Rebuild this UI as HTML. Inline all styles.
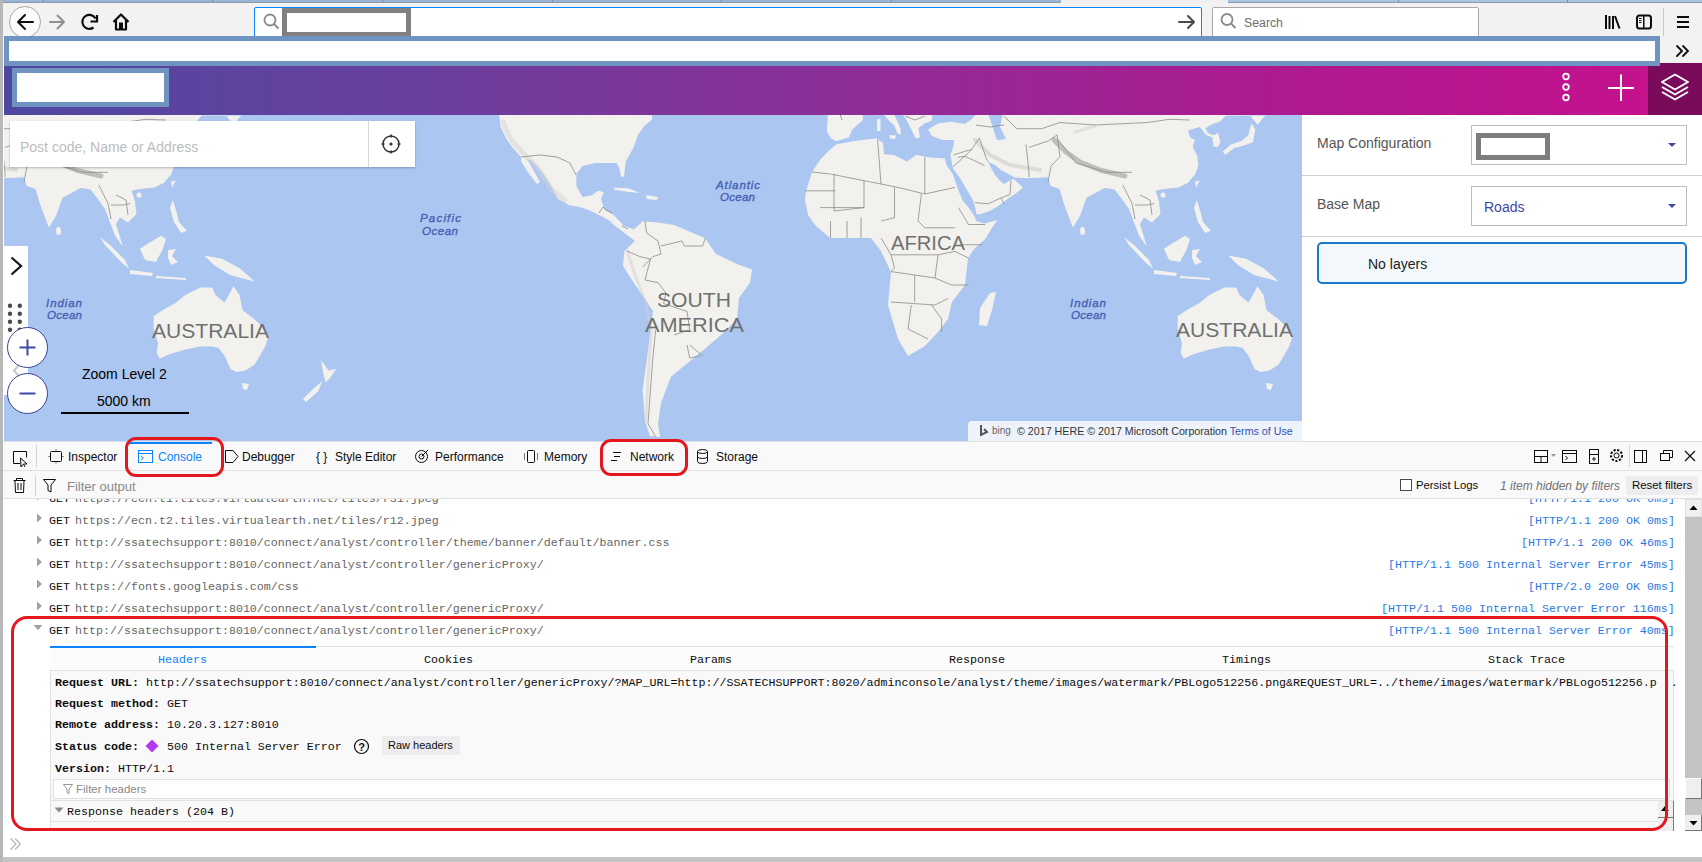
<!DOCTYPE html>
<html><head><meta charset="utf-8">
<style>
*{box-sizing:border-box;margin:0;padding:0}
html,body{width:1702px;height:862px;overflow:hidden;background:#fff;font-family:"Liberation Sans",sans-serif;position:relative}
.a{position:absolute}
.mono{font-family:"Liberation Mono",monospace}
.t{white-space:pre;line-height:1}
</style></head><body>
<!-- left gray edge -->
<div class="a" style="left:0;top:0;width:3px;height:862px;background:#b8b8b8;z-index:50"></div>
<!-- tab strip -->
<div class="a" style="left:3px;top:0;width:1699px;height:3px;background:#f0f0f0"></div>
<div class="a" style="left:3px;top:0;width:1058px;height:2px;background:#98b4d6"></div>
<div class="a" style="left:1228px;top:0;width:474px;height:2px;background:#a8c4e4"></div>
<div class="a" style="left:3px;top:2px;width:1058px;height:1px;background:#8e9aa8"></div>
<div class="a" style="left:1228px;top:2px;width:474px;height:1px;background:#8e9aa8"></div>
<div class="a" style="left:43px;top:0;width:1px;height:2px;background:#7d8ba0"></div><div class="a" style="left:212px;top:0;width:1px;height:2px;background:#7d8ba0"></div><div class="a" style="left:382px;top:0;width:1px;height:2px;background:#7d8ba0"></div><div class="a" style="left:552px;top:0;width:1px;height:2px;background:#7d8ba0"></div><div class="a" style="left:721px;top:0;width:1px;height:2px;background:#7d8ba0"></div><div class="a" style="left:891px;top:0;width:1px;height:2px;background:#7d8ba0"></div><div class="a" style="left:1398px;top:0;width:1px;height:2px;background:#7d8ba0"></div><div class="a" style="left:1567px;top:0;width:1px;height:2px;background:#7d8ba0"></div>
<!-- toolbar -->
<div class="a" style="left:3px;top:3px;width:1699px;height:60px;background:#f2f2f2"></div>
<div class="a" style="left:9px;top:6px;width:32px;height:32px;border-radius:50%;border:1px solid #a8a8a8;background:#fbfbfb"></div>
<svg class="a" style="left:0;top:0" width="140" height="40">
 <path d="M18 22 H33 M25 15 L18 22 L25 29" fill="none" stroke="#0c0c0d" stroke-width="2" stroke-linecap="round" stroke-linejoin="round"/>
 <path d="M50 22 H64 M57.5 15.5 L64 22 L57.5 28.5" fill="none" stroke="#8f8f8f" stroke-width="2" stroke-linecap="round" stroke-linejoin="round"/>
 <path d="M95.5 18.5 A7 7 0 1 0 93.5 27.5" fill="none" stroke="#0c0c0d" stroke-width="2.2"/>
 <path d="M97 15 V21.5 H90.5" fill="none" stroke="#0c0c0d" stroke-width="2.2"/>
 <path d="M113.5 22 L121 14.5 L128.5 22 M116 20 V29.5 H126 V20" fill="none" stroke="#0c0c0d" stroke-width="2.2" stroke-linejoin="round"/>
 <rect x="119" y="22.5" width="4" height="7" fill="#0c0c0d"/>
</svg>
<!-- url bar -->
<div class="a" style="left:254px;top:7px;width:948px;height:34px;border:1px solid #0a84ff;border-radius:2px;background:#fff"></div>
<svg class="a" style="left:260px;top:10px" width="24" height="24"><circle cx="10" cy="10" r="5.5" fill="none" stroke="#8a8a8a" stroke-width="1.8"/><path d="M14 14 L18.5 18.5" stroke="#8a8a8a" stroke-width="2"/></svg>
<div class="a" style="left:282px;top:8px;width:129px;height:29px;border:5px solid #808080;background:#fff"></div>
<svg class="a" style="left:1176px;top:12px" width="24" height="20"><path d="M3 10 H18 M12 4 L18 10 L12 16" fill="none" stroke="#4a4a4a" stroke-width="2" stroke-linecap="round" stroke-linejoin="round"/></svg>
<!-- search -->
<div class="a" style="left:1212px;top:7px;width:267px;height:34px;border:1px solid #a8a8a8;border-radius:2px;background:#fff"></div>
<svg class="a" style="left:1218px;top:10px" width="24" height="24"><circle cx="9" cy="9.5" r="5.5" fill="none" stroke="#8a8a8a" stroke-width="1.8"/><path d="M13 13.5 L17.5 18" stroke="#8a8a8a" stroke-width="2"/></svg>
<div class="a t" style="left:1244px;top:17px;font-size:12.3px;color:#6d6d6d">Search</div>
<!-- right toolbar icons -->
<svg class="a" style="left:1600px;top:8px" width="100" height="56">
 <rect x="5" y="7" width="2" height="14" fill="#0c0c0d"/><rect x="8.5" y="8" width="2" height="13" fill="#0c0c0d"/><rect x="12" y="8" width="2" height="13" fill="#0c0c0d"/>
 <path d="M15 8 L19.5 20.5" stroke="#0c0c0d" stroke-width="2"/>
 <rect x="37" y="7.5" width="14" height="13" rx="2.5" fill="none" stroke="#0c0c0d" stroke-width="2"/>
 <rect x="43" y="8" width="1.5" height="12" fill="#0c0c0d"/>
 <rect x="39" y="10" width="2.5" height="1" fill="#0c0c0d"/><rect x="39" y="12" width="2.5" height="1" fill="#0c0c0d"/><rect x="39" y="14" width="2.5" height="1" fill="#0c0c0d"/>
 <rect x="63" y="-2" width="1" height="30" fill="#c8c8c8"/>
 <rect x="77" y="8" width="12" height="2" fill="#0c0c0d"/><rect x="77" y="13" width="12" height="2" fill="#0c0c0d"/><rect x="77" y="18" width="12" height="2" fill="#0c0c0d"/>
 <path d="M77 38 L82 43 L77 48 M83 38 L88 43 L83 48" fill="none" stroke="#0c0c0d" stroke-width="1.8" stroke-linecap="round"/>
</svg>
<!-- bookmark band (blue) -->
<div class="a" style="left:4px;top:36px;width:1656px;height:30px;background:#7094c2;z-index:5"></div>
<div class="a" style="left:9px;top:41px;width:1646px;height:20px;background:#fff;z-index:6"></div>
<!-- app header -->
<div class="a" style="left:4px;top:63px;width:1698px;height:52px;background:linear-gradient(90deg,#4e48a0 0%,#6a3f9d 25%,#8e2d98 50%,#ad1a90 75%,#c8108c 100%)"></div>
<div class="a" style="left:1648px;top:63px;width:54px;height:52px;background:#7a0b5a"></div>
<div class="a" style="left:12px;top:68px;width:157px;height:39px;border:5px solid #7094c2;background:#fff"></div>
<svg class="a" style="left:1550px;top:66px" width="152" height="48">
 <circle cx="16" cy="10.5" r="2.8" fill="none" stroke="#fff" stroke-width="1.8"/>
 <circle cx="16" cy="21" r="2.8" fill="none" stroke="#fff" stroke-width="1.8"/>
 <circle cx="16" cy="31.5" r="2.8" fill="none" stroke="#fff" stroke-width="1.8"/>
 <path d="M58 22 H84 M71 8.5 V35" stroke="#fff" stroke-width="2"/>
 <path d="M112 16 L125 8.5 L138 16 L125 23.5 Z" fill="none" stroke="#fff" stroke-width="2" stroke-linejoin="round"/>
 <path d="M112 21 L125 28.5 L138 21" fill="none" stroke="#fff" stroke-width="2" stroke-linejoin="round"/>
 <path d="M112 26 L125 33.5 L138 26" fill="none" stroke="#fff" stroke-width="2" stroke-linejoin="round"/>
</svg>

<!-- MAP -->
<div id="map" class="a" style="left:4px;top:115px;width:1298px;height:326px;background:#abc6f0;overflow:hidden">
<svg id="land" class="a" style="left:0;top:0" width="1298" height="326" viewBox="4 115 1298 326"><defs><g id="w"><polygon points="499,114 652,114 652,119.7 644.3,125.9 638,135 633.5,147.5 625.8,161.4 624,176.8 621,176.8 619.6,169 616.5,163 607.3,163 595,163 582.6,166 576.4,173.7 576.4,186 582.6,196.9 592,195.3 598,190.7 604,192 601,198.4 604,209 613.5,215 624,226 633.5,229.3 635,234 629,231 618,227 610.4,221 598,214.5 588.8,210 579.5,207 570,205.5 558,199 551.7,187 544,174.5 531.7,160.5 520.9,157 513,148 507,140 500.8,127.4" fill="#f2f1ed"/><polygon points="521,155 525,156 531,166 540,182 537,184 527,171 521,161" fill="#f2f1ed"/><polygon points="613.5,187.6 629,188.5 640,193 629,192 615,190" fill="#f2f1ed"/><polygon points="646,195 658,197 657,200 647,199" fill="#f2f1ed"/><polygon points="608.7,221 620,227 632,231 642.7,221.3 658,222.6 674,225 705,238 716,254 737,264 752,269.6 750,282.7 739,298 737,319 721,335 703,350.5 690,361 671,376.7 666,389.7 661,402.8 658,423.7 660,437 650,436 645,421 642.7,389.7 648,350.5 653,311 642.7,295.7 632,280 623,265.7 624.4,251 635,241" fill="#f2f1ed"/><polygon points="806,191 812,172 820,160 828,151.6 836,144.6 854,141 876,138.4 883,142.8 884,154.3 894,155 907,161.4 916,155 930,157.4 945,158.6 946.2,164.4 953.2,174.8 957.8,188.7 962.5,200.3 968.3,207.3 974,215.4 976.4,221.2 984.5,223.5 997.3,220 990.3,230.5 985.7,238.6 975,248 968,258 965,285 952,302 948,319 938,332 925,346 908,356 898,339 888,305 891,272 881,251 871,238 850,238 830,238 815,225 808,215 805,200" fill="#f2f1ed"/><polygon points="990,293 996,292 992,310 987,326 979,325 980,308" fill="#f2f1ed"/><polygon points="827.6,114 862.9,114 862.9,120 852.3,129.6 848.8,137.5 836.4,141 831,138.4 826.7,131.4 827.6,120.8" fill="#f2f1ed"/><polygon points="883,114 893.7,114 898,122.6 900.7,129.6 900.7,135 897.2,133 894.6,126 887.5,119" fill="#f2f1ed"/><polygon points="889,135 896,135.5 895,139.3 890,138.5" fill="#f2f1ed"/><polygon points="877,119 880.5,119 880.5,131 877,131" fill="#f2f1ed"/><polygon points="902.5,114 932.5,114 931.6,120.8 924.5,123.5 918.4,128 920,137.5 915.7,138.4 911.3,129.6 907,120.8" fill="#f2f1ed"/><polygon points="928,129.6 938,123.5 951,121.7 965,124 972,119 976,114 1266,114 1265.7,115.5 1226,115.5 1220.5,121.3 1211,124.8 1205.4,128.2 1207.7,133 1213.5,135.2 1218,133 1220.5,142 1218,146.8 1213.5,146.8 1212.4,137.5 1206.6,135.2 1199.6,127 1188,130.6 1190.3,137.5 1195,140 1192.6,146.8 1197.3,156 1198.4,165.4 1195,174.6 1188,182.8 1178.7,187.4 1168.3,188.6 1159,189.7 1155.6,191 1159,201 1160.5,214 1152,222.5 1144,217.6 1140,224 1147,247 1139,235.6 1134,222.5 1129,209 1121,197.8 1114.5,189.6 1104.6,188 1086.5,197.8 1080,216 1073,227.4 1068.5,216 1064,204 1059.6,189 1050.7,186 1047.7,177.3 1030,178 1022.8,178 1014.7,177.5 1011.2,175.5 1002,170.5 995,165 988,161.5 990.3,166.7 995,174.8 999.6,180.6 1004.2,184 1011.2,179.8 1013.5,179 1018.2,183 1022.8,187.6 1021.6,188.7 1015.8,193.4 1008.9,198 999.6,205 990.3,210.8 980,214.2 976.4,214.2 975.2,207.3 973,200.3 967,190 960.2,178.3 953.2,169 950.3,155 953.2,147 954.4,140 942,140 931.6,135.8" fill="#f2f1ed"/><polygon points="1251.8,123.6 1255.3,129.4 1253,142.2 1243.7,145.6 1234.4,148 1225,155 1222.8,151.4 1231,144.5 1241.4,141 1248.3,135.2 1250.6,126" fill="#f2f1ed"/><polygon points="1250.6,116 1264.6,116 1257.6,124.8" fill="#f2f1ed"/><polygon points="1195,181.6 1199.6,180.4 1196.1,187.4" fill="#f2f1ed"/><polygon points="1124,237 1134,245 1149,260 1153,268.5 1145,262 1129,245" fill="#f2f1ed"/><polygon points="1154,270 1177,273 1176,276 1154,274" fill="#f2f1ed"/><polygon points="1180,276 1210,278 1210,280 1180,278" fill="#f2f1ed"/><polygon points="1164,248.8 1177,240.6 1185,235.7 1190,239 1187,248.8 1180,262 1169,260" fill="#f2f1ed"/><polygon points="1192,250 1200,249 1196,256 1202,262 1195,265 1192,258" fill="#f2f1ed"/><polygon points="1196.7,200 1200,210 1203,222 1211,230.7 1205,233 1198,222 1194,208" fill="#f2f1ed"/><polygon points="1228,255.4 1246,258.7 1264,268.5 1279,281.7 1254,275 1238,265" fill="#f2f1ed"/><polygon points="1177.6,316.2 1186.6,310.2 1200.2,302.6 1209.2,295 1224.3,287.5 1236.4,287.5 1239.4,295 1248.5,302.6 1254.5,292 1257.5,286 1263.5,295 1266.6,310.2 1278.6,319.2 1284.7,325.2 1292.2,337.3 1289.2,346.4 1283.2,357 1278.6,364.5 1269.6,370.5 1260.5,372 1254.5,369 1248.5,355.4 1242.4,347.9 1236.4,346.4 1224.3,346.4 1209.2,349.4 1194.2,353.9 1183.6,358.4 1180.6,352.4 1182,343.3 1177.6,328.3" fill="#f2f1ed"/><polygon points="1266,383 1273,384 1271,390 1267,389" fill="#f2f1ed"/><polygon points="1345,360 1352.5,370.5 1360,369 1354,378 1349.5,382.6 1347,372" fill="#f2f1ed"/><polygon points="1346.5,381 1342,391.6 1330,402 1327,399 1337.5,388.6" fill="#f2f1ed"/><polygon points="988,113 1003,113 1000,127 1006,139 997,140 993,128" fill="#abc6f0"/><ellipse cx="1082.5" cy="231" rx="2.5" ry="4" fill="#f2f1ed"/><circle cx="1163" cy="195" r="2.5" fill="#f2f1ed"/><g fill="none" stroke-linecap="round" stroke-linejoin="round"><polyline points="1054,140 1066,152 1080,162 1100,170 1125,176" stroke="#a8a8a8" stroke-width="5" opacity="0.7"/><polyline points="503,122 510,138 522,152 538,168 552,190 565,200" stroke="#d4d4d4" stroke-width="5" opacity="0.5"/><polyline points="627,250 635,275 645,300 651,330 648,380 646,420" stroke="#d0d0d0" stroke-width="3" opacity="0.5"/><polyline points="975,140 990,155 1010,165 1040,170" stroke="#c8c8c8" stroke-width="4" opacity="0.5"/><polyline points="1075,132 1095,126" stroke="#cfcfcf" stroke-width="3" opacity="0.5"/></g><g fill="none" stroke="#8c8c8c" stroke-width="0.8" stroke-linejoin="round"><polyline points="877.6,140 881,184"/><polyline points="924.8,157 924.8,194"/><polyline points="830.5,174 864,180.7 881,184 898,187.4 924.8,194 955,187.4"/><polyline points="864,180.7 864,207.6 834,211"/><polyline points="894.5,187.4 894.5,217.7 881,221"/><polyline points="921.4,194 918,221 924.8,227.8 955,227.8"/><polyline points="834,174 834,211"/><polyline points="805,190.8 835.5,190.8"/><polyline points="820,207.6 864,207.6"/><polyline points="830.5,221 830.5,238"/><polyline points="847,221 847,238"/><polyline points="861,217.7 861,238"/><polyline points="881,238 891,254.8 894.5,268 891,271.6"/><polyline points="891,254.8 938,254.8 955,251.4 968.5,258"/><polyline points="938,254.8 935,278 914.7,275 891,271.6"/><polyline points="935,278 951.7,285 968.5,285"/><polyline points="891,302 935,305 948,298.5"/><polyline points="914.7,275 914.7,302"/><polyline points="911.3,305 908,329 928,339"/><polyline points="931.5,305 941.6,318.8 941.6,332"/><polyline points="958.5,207.6 968.5,224.5 985.4,224.5"/><polyline points="962,244.7 982,244.7"/><polyline points="812,172 830,174"/><polyline points="645,221 646.6,233 658,241 661,254 653,256.6 642.7,267"/><polyline points="661,246 681.8,241 684.4,246 702.7,246 705.3,238"/><polyline points="627,251 640,256.6 650.5,259"/><polyline points="650.5,259 645,280 658,282.7 666,293 663.5,303.5"/><polyline points="663.5,303.5 679,308.8 687,311.4 689.7,329.7"/><polyline points="655.7,329.7 653,355.8 650.5,389.7 648,423.7 655.7,436.7"/><polyline points="674,335 689.7,329.7"/><polyline points="689.7,345 702.7,355.8"/><polyline points="687,345 689.7,358 700,355.8"/><polyline points="622,226 628,229"/><polyline points="521,157 540,155 557,157 570,163 576,175"/><polyline points="599,213 603,207 606,210 612,213"/><polyline points="979.4,138 985.6,156.7 988,161.5"/><polyline points="953.2,166.7 964.8,156.2 984.5,165.5"/><polyline points="975,202.6 988,203.8 1000.8,198 1010,194.5 1011,180"/><polyline points="1000.8,198 1004.2,203.8"/><polyline points="957.8,157.4 964.8,156.2 971.8,149.3"/><polyline points="953.2,155 971.8,149.3 979.4,138"/><polyline points="1026,144.3 1029,172.3 1029,177"/><polyline points="1029,147.4 1048,141 1057,135 1060,156.7 1051,166 1048,181.7"/><polyline points="1057,138 1076,163 1107,172.3 1132,172.3"/><polyline points="1004,116.2 1016.8,128.7 1041.7,128.7 1060,122.5"/><polyline points="1060,122.5 1095,125 1147.6,122.5 1169.4,119.3 1190,120"/><polyline points="1122.7,184.8 1132,203.5 1135,219"/><polyline points="1135,205 1147.6,205 1154,203.5"/><polyline points="1140,195 1150,200 1152,215"/><polyline points="976,125 990,127 1004,125"/><polyline points="840,114 842,120"/><polyline points="905,116 915,120 925,116"/></g></g></defs><use href="#w"/><use href="#w" x="-1024"/></svg>
<svg class="a" style="left:0;top:0" width="1298" height="326" viewBox="4 115 1298 326">
 <g font-family="Liberation Sans" font-size="20.5" fill="#707070" stroke="#f4f3ee" stroke-width="0" >
  <text x="152" y="337.7" textLength="117" lengthAdjust="spacingAndGlyphs">AUSTRALIA</text>
  <text x="1176" y="337" textLength="117" lengthAdjust="spacingAndGlyphs">AUSTRALIA</text>
  <text x="657" y="306.7" textLength="74" lengthAdjust="spacingAndGlyphs">SOUTH</text>
  <text x="645" y="331.7" textLength="99" lengthAdjust="spacingAndGlyphs">AMERICA</text>
  <text x="891" y="249.7" textLength="74" lengthAdjust="spacingAndGlyphs">AFRICA</text>
 </g>
 <g font-family="Liberation Sans" font-size="11.5" font-style="italic" fill="#4760b2" stroke="#4760b2" stroke-width="0.35">
  <text x="420" y="222.3" textLength="41" lengthAdjust="spacing">Pacific</text>
  <text x="422" y="234.6" textLength="36" lengthAdjust="spacing">Ocean</text>
  <text x="716" y="188.5" textLength="44" lengthAdjust="spacing">Atlantic</text>
  <text x="720" y="201" textLength="35" lengthAdjust="spacing">Ocean</text>
  <text x="46" y="307" textLength="36" lengthAdjust="spacing">Indian</text>
  <text x="47" y="319" textLength="35" lengthAdjust="spacing">Ocean</text>
  <text x="1070" y="306.6" textLength="36" lengthAdjust="spacing">Indian</text>
  <text x="1071" y="319" textLength="35" lengthAdjust="spacing">Ocean</text>
 </g>
</svg>
<!-- search box -->
<div class="a" style="left:6px;top:6px;width:405px;height:46px;background:#fff;box-shadow:0 1px 2px rgba(0,0,0,0.25)"></div>
<div class="a" style="left:364px;top:6px;width:1px;height:46px;background:#d8d8d8"></div>
<div class="a t" style="left:16px;top:25px;font-size:14px;color:#bdbdbd">Post code, Name or Address</div>
<svg class="a" style="left:376px;top:18px" width="22" height="22"><circle cx="11" cy="11" r="8" fill="none" stroke="#333" stroke-width="1.5"/><circle cx="11" cy="11" r="1.6" fill="#333"/><path d="M11 1.5 V4.5 M11 17.5 V20.5 M1.5 11 H4.5 M17.5 11 H20.5" stroke="#333" stroke-width="1.6"/></svg>
<!-- side tab -->
<div class="a" style="left:0;top:131px;width:24px;height:149px;background:#fff"></div>
<svg class="a" style="left:0;top:140px" width="24" height="24"><path d="M7.5 2.5 L17 11 L7.5 19.5" fill="none" stroke="#1a1a1a" stroke-width="2.3"/></svg><svg class="a" style="left:0;top:248px" width="24" height="16"><path d="M15 2 L10 7.5 L15 13" fill="none" stroke="#c8c8c8" stroke-width="2"/></svg>
<svg class="a" style="left:0;top:185px" width="24" height="40"><g fill="#4a4a4a"><circle cx="6" cy="5.8" r="2.2"/><circle cx="15.8" cy="5.8" r="2.2"/><circle cx="6" cy="13.8" r="2.2"/><circle cx="15.8" cy="13.8" r="2.2"/><circle cx="6" cy="21.8" r="2.2"/><circle cx="15.8" cy="21.8" r="2.2"/><circle cx="6" cy="29.8" r="2.2"/><circle cx="15.8" cy="29.8" r="2.2"/></g></svg>
<!-- zoom buttons -->
<div class="a" style="left:3px;top:212px;width:41px;height:41px;border-radius:50%;border:1px solid #3b3f8f;background:#fff"></div>
<svg class="a" style="left:3px;top:212px" width="41" height="41"><path d="M12.5 20.5 H28.5 M20.5 12.5 V28.5" stroke="#3b49a8" stroke-width="2"/></svg>
<div class="a" style="left:3px;top:258px;width:41px;height:41px;border-radius:50%;border:1px solid #3b3f8f;background:#fff"></div>
<svg class="a" style="left:3px;top:258px" width="41" height="41"><path d="M12.5 20.5 H28.5" stroke="#3b49a8" stroke-width="2"/></svg>
<div class="a t" style="left:78px;top:252px;font-size:14px;color:#000">Zoom Level 2</div>
<div class="a t" style="left:93px;top:279px;font-size:14px;color:#000">5000 km</div>
<div class="a" style="left:57px;top:297px;width:128px;height:2px;background:#000"></div>
<!-- attribution -->
<div class="a" style="left:964px;top:306px;width:334px;height:20px;background:#eef3fb;border-top-left-radius:4px"></div>
<svg class="a" style="left:975px;top:309px" width="40" height="14"><path d="M2 1 V11 L8 8 L5 5" fill="none" stroke="#555" stroke-width="2"/><text x="13" y="10" font-family="Liberation Sans" font-size="10" fill="#666">bing</text></svg>
<div class="a t" style="left:1013px;top:311px;font-size:10.7px;color:#333">© 2017 HERE © 2017 Microsoft Corporation <span style="color:#3650a8">Terms of Use</span></div>
</div>

<!-- RIGHT PANEL -->
<div class="a" style="left:1302px;top:115px;width:400px;height:326px;background:#fff">
 <div class="a t" style="left:15px;top:21px;font-size:14px;color:#555">Map Configuration</div>
 <div class="a" style="left:169px;top:10px;width:216px;height:40px;border:1px solid #bdbdbd;background:#fff"></div>
 <div class="a" style="left:174px;top:18px;width:74px;height:27px;border:5px solid #7d7d7d;background:#fff"></div>
 <svg class="a" style="left:365px;top:27px" width="12" height="8"><path d="M1 1 H9 L5 5 Z" fill="#3d47a3"/></svg>
 <div class="a" style="left:0;top:60px;width:400px;height:1px;background:#d0d0d0"></div>
 <div class="a t" style="left:15px;top:82px;font-size:14px;color:#555">Base Map</div>
 <div class="a" style="left:169px;top:71px;width:216px;height:40px;border:1px solid #bdbdbd;background:#fff"></div>
 <div class="a t" style="left:182px;top:85px;font-size:14px;color:#3d47a3">Roads</div>
 <svg class="a" style="left:365px;top:88px" width="12" height="8"><path d="M1 1 H9 L5 5 Z" fill="#3d47a3"/></svg>
 <div class="a" style="left:0;top:121px;width:400px;height:1px;background:#d0d0d0"></div>
 <div class="a" style="left:15px;top:127px;width:370px;height:42px;border:2px solid #1b78c6;border-radius:5px;background:#f3f8fc"></div>
 <div class="a t" style="left:66px;top:142px;font-size:14px;color:#222">No layers</div>
</div>

<!-- DEVTOOLS -->
<div class="a" style="left:3px;top:441px;width:1699px;height:30px;background:#f9f9fa;border-bottom:1px solid #e0e0e2"></div>
<div class="a" style="left:3px;top:441px;width:1699px;height:1px;background:#e0e0e2"></div>
<svg class="a" style="left:0;top:441px" width="800" height="30">
 <g fill="none" stroke="#0c0c0d" stroke-width="1">
  <path d="M26.5 16.5 V10.5 H13.5 V22.5 H20"/>
  <path d="M20.5 17 L27 23 L23.5 23 L25 26 M20.5 17 L21 26 L23 23.5" stroke-width="1"/>
 </g>
 <rect x="36" y="4" width="1" height="22" fill="#d7d7db"/>
 <g fill="none" stroke="#0c0c0d" stroke-width="1">
  <rect x="50.5" y="10.5" width="11" height="10" rx="1"/>
  <path d="M48 15.5 H50 M62 15.5 H64 M56 8 V10 M56 21 V23" stroke="#888"/>
 </g>
 <g fill="none" stroke="#0a84ff" stroke-width="1">
  <rect x="138.5" y="9.5" width="14" height="12"/>
  <path d="M138.5 12.5 H152.5 M141 15 L143.5 17 L141 19"/>
 </g>
 <path d="M225.5 9.5 H233 L238 15.5 L233 21.5 H225.5 Z" fill="none" stroke="#0c0c0d"/>
 <text x="316" y="19.5" font-family="Liberation Sans" font-size="12" fill="#0c0c0d">{ }</text>
 <g fill="none" stroke="#0c0c0d">
  <circle cx="421.5" cy="15.5" r="6"/><circle cx="421.5" cy="15.5" r="2.5"/><path d="M421.5 15.5 L428 9"/>
 </g>
 <g fill="none" stroke="#0c0c0d">
  <rect x="527.5" y="9.5" width="7" height="12" rx="1"/><path d="M524.5 12 V19 M537.5 12 V19" stroke="#777"/>
 </g>
 <g stroke="#0c0c0d"><path d="M613 11.5 H621 M614 15.5 H620 M611 19.5 H617"/></g>
 <g fill="none" stroke="#0c0c0d">
  <ellipse cx="702.5" cy="10.5" rx="5" ry="2"/><path d="M697.5 10.5 V20.5 A5 2 0 0 0 707.5 20.5 V10.5 M697.5 15.5 A5 2 0 0 0 707.5 15.5"/>
 </g>
</svg>
<div class="a" style="left:128px;top:442px;width:84px;height:2px;background:#0a84ff"></div>
<div class="a t" style="left:68px;top:451px;font-family:'Liberation Sans',sans-serif;font-size:12px;color:#0c0c0d">Inspector</div>
<div class="a t" style="left:158px;top:451px;font-family:'Liberation Sans',sans-serif;font-size:12px;color:#0a84ff">Console</div>
<div class="a t" style="left:242px;top:451px;font-family:'Liberation Sans',sans-serif;font-size:12px;color:#0c0c0d">Debugger</div>
<div class="a t" style="left:335px;top:451px;font-family:'Liberation Sans',sans-serif;font-size:12px;color:#0c0c0d">Style Editor</div>
<div class="a t" style="left:435px;top:451px;font-family:'Liberation Sans',sans-serif;font-size:12px;color:#0c0c0d">Performance</div>
<div class="a t" style="left:544px;top:451px;font-family:'Liberation Sans',sans-serif;font-size:12px;color:#0c0c0d">Memory</div>
<div class="a t" style="left:630px;top:451px;font-family:'Liberation Sans',sans-serif;font-size:12px;color:#0c0c0d">Network</div>
<div class="a t" style="left:716px;top:451px;font-family:'Liberation Sans',sans-serif;font-size:12px;color:#0c0c0d">Storage</div>
<svg class="a" style="left:1520px;top:441px" width="182" height="30">
 <g fill="none" stroke="#0c0c0d">
  <rect x="14.5" y="9.5" width="13" height="12"/><path d="M14.5 15.5 H27.5 M21 15.5 V21.5"/>
 </g>
 <path d="M31 13 H36 L33.5 16 Z" fill="#999"/>
 <g fill="none" stroke="#0c0c0d">
  <rect x="42.5" y="9.5" width="14" height="12"/><path d="M42.5 12.5 H56.5 M45.5 15 L47.5 17 L45.5 19"/>
  <rect x="69.5" y="8.5" width="9" height="14"/><circle cx="74" cy="18" r="1.2"/><path d="M69.5 13.5 H78.5"/>
  <circle cx="96.5" cy="14.5" r="2.5"/><circle cx="96.5" cy="14.5" r="5.5" stroke-dasharray="2.2 1.5" stroke-width="2"/>
 </g>
 <rect x="109" y="4" width="1" height="22" fill="#d7d7db"/>
 <g fill="none" stroke="#0c0c0d">
  <rect x="114.5" y="9.5" width="12" height="12"/><path d="M122.5 9.5 V21.5"/>
  <rect x="140.5" y="12.5" width="9" height="7"/><path d="M143.5 12.5 V9.5 H152.5 V16.5 H149.5"/>
  <path d="M165 10 L175 20 M175 10 L165 20" stroke-width="1.2"/>
 </g>
</svg>
<div class="a" style="left:3px;top:471px;width:1699px;height:28px;background:#f9f9fa;border-bottom:1px solid #e0e0e2"></div>
<svg class="a" style="left:0;top:471px" width="70" height="28">
 <g fill="none" stroke="#0c0c0d">
  <path d="M13.5 9.5 H25.5 M16.5 9.5 V7.5 H22.5 V9.5 M15 10 L15.5 21.5 H23.5 L24 10 M18 12 V19 M21 12 V19"/>
 </g>
 <rect x="35" y="4" width="1" height="21" fill="#d7d7db"/>
 <path d="M43.5 8.5 H55.5 L51 14 V21 L48 19.5 V14 Z" fill="none" stroke="#0c0c0d"/>
</svg>
<div class="a t" style="left:67px;top:480px;font-family:'Liberation Sans',sans-serif;font-size:13px;color:#8a8a8a">Filter output</div>
<div class="a" style="left:1400px;top:479px;width:12px;height:12px;border:1px solid #4a4a4a;background:#fff"></div>
<div class="a t" style="left:1416px;top:480px;font-family:'Liberation Sans',sans-serif;font-size:11.3px;color:#0c0c0d">Persist Logs</div>
<div class="a t" style="left:1500px;top:480px;font-family:'Liberation Sans',sans-serif;font-size:12px;font-style:italic;color:#737373">1 item hidden by filters</div>
<div class="a" style="left:1626px;top:476px;width:72px;height:19px;background:#ededf0;border-radius:2px"></div>
<div class="a t" style="left:1632px;top:480px;font-family:'Liberation Sans',sans-serif;font-size:11.4px;color:#0c0c0d">Reset filters</div>
<div class="a" style="left:3px;top:499px;width:1682px;height:332px;overflow:hidden;background:#fff">
<div class="a" style="left:-3px;top:-499px;width:1702px;height:862px">
<svg class="a" style="left:36px;top:491px" width="8" height="12"><path d="M1 0.5 V9.5 L6 5 Z" fill="#a0a0a0"/></svg><div class="a t" style="left:49px;top:494px;font-family:'Liberation Mono',monospace;font-size:11.67px;color:#0c0c0d">GET</div><div class="a t" style="left:75px;top:494px;font-family:'Liberation Mono',monospace;font-size:11.67px;color:#666">https://ecn.t1.tiles.virtualearth.net/tiles/r31.jpeg</div><div class="a t" style="left:1528px;top:494px;font-family:'Liberation Mono',monospace;font-size:11.67px;color:#2a7ae2">[HTTP/1.1 200 OK 0ms]</div>
<svg class="a" style="left:36px;top:513px" width="8" height="12"><path d="M1 0.5 V9.5 L6 5 Z" fill="#a0a0a0"/></svg><div class="a t" style="left:49px;top:516px;font-family:'Liberation Mono',monospace;font-size:11.67px;color:#0c0c0d">GET</div><div class="a t" style="left:75px;top:516px;font-family:'Liberation Mono',monospace;font-size:11.67px;color:#666">https://ecn.t2.tiles.virtualearth.net/tiles/r12.jpeg</div><div class="a t" style="left:1528px;top:516px;font-family:'Liberation Mono',monospace;font-size:11.67px;color:#2a7ae2">[HTTP/1.1 200 OK 0ms]</div>
<svg class="a" style="left:36px;top:535px" width="8" height="12"><path d="M1 0.5 V9.5 L6 5 Z" fill="#a0a0a0"/></svg><div class="a t" style="left:49px;top:538px;font-family:'Liberation Mono',monospace;font-size:11.67px;color:#0c0c0d">GET</div><div class="a t" style="left:75px;top:538px;font-family:'Liberation Mono',monospace;font-size:11.67px;color:#666">http://ssatechsupport:8010/connect/analyst/controller/theme/banner/default/banner.css</div><div class="a t" style="left:1521px;top:538px;font-family:'Liberation Mono',monospace;font-size:11.67px;color:#2a7ae2">[HTTP/1.1 200 OK 46ms]</div>
<svg class="a" style="left:36px;top:557px" width="8" height="12"><path d="M1 0.5 V9.5 L6 5 Z" fill="#a0a0a0"/></svg><div class="a t" style="left:49px;top:560px;font-family:'Liberation Mono',monospace;font-size:11.67px;color:#0c0c0d">GET</div><div class="a t" style="left:75px;top:560px;font-family:'Liberation Mono',monospace;font-size:11.67px;color:#666">http://ssatechsupport:8010/connect/analyst/controller/genericProxy/</div><div class="a t" style="left:1388px;top:560px;font-family:'Liberation Mono',monospace;font-size:11.67px;color:#2a7ae2">[HTTP/1.1 500 Internal Server Error 45ms]</div>
<svg class="a" style="left:36px;top:579px" width="8" height="12"><path d="M1 0.5 V9.5 L6 5 Z" fill="#a0a0a0"/></svg><div class="a t" style="left:49px;top:582px;font-family:'Liberation Mono',monospace;font-size:11.67px;color:#0c0c0d">GET</div><div class="a t" style="left:75px;top:582px;font-family:'Liberation Mono',monospace;font-size:11.67px;color:#666">https://fonts.googleapis.com/css</div><div class="a t" style="left:1528px;top:582px;font-family:'Liberation Mono',monospace;font-size:11.67px;color:#2a7ae2">[HTTP/2.0 200 OK 0ms]</div>
<svg class="a" style="left:36px;top:601px" width="8" height="12"><path d="M1 0.5 V9.5 L6 5 Z" fill="#a0a0a0"/></svg><div class="a t" style="left:49px;top:604px;font-family:'Liberation Mono',monospace;font-size:11.67px;color:#0c0c0d">GET</div><div class="a t" style="left:75px;top:604px;font-family:'Liberation Mono',monospace;font-size:11.67px;color:#666">http://ssatechsupport:8010/connect/analyst/controller/genericProxy/</div><div class="a t" style="left:1381px;top:604px;font-family:'Liberation Mono',monospace;font-size:11.67px;color:#2a7ae2">[HTTP/1.1 500 Internal Server Error 116ms]</div>
<svg class="a" style="left:33px;top:624px" width="12" height="8"><path d="M0.5 1 H9.5 L5 6 Z" fill="#a0a0a0"/></svg><div class="a t" style="left:49px;top:626px;font-family:'Liberation Mono',monospace;font-size:11.67px;color:#0c0c0d">GET</div><div class="a t" style="left:75px;top:626px;font-family:'Liberation Mono',monospace;font-size:11.67px;color:#666">http://ssatechsupport:8010/connect/analyst/controller/genericProxy/</div><div class="a t" style="left:1388px;top:626px;font-family:'Liberation Mono',monospace;font-size:11.67px;color:#2a7ae2">[HTTP/1.1 500 Internal Server Error 40ms]</div>
<div class="a" style="left:50px;top:646px;width:1624px;height:200px;background:#f9f9fa;border-left:1px solid #e0e0e2;border-right:1px solid #e0e0e2"></div>
<div class="a" style="left:50px;top:646px;width:1624px;height:25px;background:#fcfcfc;border-top:1px solid #e0e0e2;border-bottom:1px solid #e0e0e2"></div>
<div class="a" style="left:50px;top:646px;width:266px;height:2px;background:#0a84ff"></div>
<div class="a t" style="left:158px;top:655px;font-family:'Liberation Mono',monospace;font-size:11.67px;color:#0a84ff">Headers</div>
<div class="a t" style="left:424px;top:655px;font-family:'Liberation Mono',monospace;font-size:11.67px;color:#0c0c0d">Cookies</div>
<div class="a t" style="left:690px;top:655px;font-family:'Liberation Mono',monospace;font-size:11.67px;color:#0c0c0d">Params</div>
<div class="a t" style="left:949px;top:655px;font-family:'Liberation Mono',monospace;font-size:11.67px;color:#0c0c0d">Response</div>
<div class="a t" style="left:1222px;top:655px;font-family:'Liberation Mono',monospace;font-size:11.67px;color:#0c0c0d">Timings</div>
<div class="a t" style="left:1488px;top:655px;font-family:'Liberation Mono',monospace;font-size:11.67px;color:#0c0c0d">Stack Trace</div>
<div class="a t" style="left:55px;top:678px;font-family:'Liberation Mono',monospace;font-size:11.67px;color:#0c0c0d"><b>Request URL:</b> http://ssatechsupport:8010/connect/analyst/controller/genericProxy/?MAP_URL=http://SSATECHSUPPORT:8020/adminconsole/analyst/theme/images/watermark/PBLogo512256.png&amp;REQUEST_URL=../theme/images/watermark/PBLogo512256.p ..</div>
<div class="a t" style="left:55px;top:699px;font-family:'Liberation Mono',monospace;font-size:11.67px;color:#0c0c0d"><b>Request method:</b> GET</div>
<div class="a t" style="left:55px;top:720px;font-family:'Liberation Mono',monospace;font-size:11.67px;color:#0c0c0d"><b>Remote address:</b> 10.20.3.127:8010</div>
<div class="a t" style="left:55px;top:742px;font-family:'Liberation Mono',monospace;font-size:11.67px;color:#0c0c0d"><b>Status code:</b>    500 Internal Server Error</div>
<svg class="a" style="left:145px;top:739px" width="15" height="15"><path d="M7 0.5 L13.5 7 L7 13.5 L0.5 7 Z" fill="#b537ee"/></svg>
<svg class="a" style="left:353px;top:738px" width="17" height="17"><circle cx="8.5" cy="8.5" r="7" fill="none" stroke="#0c0c0d" stroke-width="1.2"/><text x="8.5" y="12.5" text-anchor="middle" font-family="Liberation Sans" font-size="11" font-weight="bold" fill="#0c0c0d">?</text></svg>
<div class="a" style="left:382px;top:736px;width:78px;height:19px;background:#ededf0;border-radius:2px"></div>
<div class="a t" style="left:388px;top:740px;font-family:'Liberation Sans',sans-serif;font-size:11px;color:#0c0c0d">Raw headers</div>
<div class="a t" style="left:55px;top:764px;font-family:'Liberation Mono',monospace;font-size:11.67px;color:#0c0c0d"><b>Version:</b> HTTP/1.1</div>
<div class="a" style="left:53px;top:779px;width:1617px;height:20px;background:#fff;border:1px solid #e0e0e2"></div>
<svg class="a" style="left:62px;top:783px" width="12" height="12"><path d="M1.5 1.5 H10.5 L7 6 V10.5 L5 9.5 V6 Z" fill="none" stroke="#999"/></svg>
<div class="a t" style="left:76px;top:784px;font-family:'Liberation Sans',sans-serif;font-size:11.5px;color:#8a8a8a">Filter headers</div>
<div class="a" style="left:51px;top:800px;width:1622px;height:1px;background:#e0e0e2"></div>
<div class="a" style="left:51px;top:821px;width:1622px;height:1px;background:#e0e0e2"></div>
<svg class="a" style="left:54px;top:807px" width="12" height="8"><path d="M0.5 0.5 H9.5 L5 5.5 Z" fill="#8a8a8a"/></svg>
<div class="a t" style="left:67px;top:807px;font-family:'Liberation Mono',monospace;font-size:11.67px;color:#0c0c0d">Response headers (204 B)</div>
<div class="a" style="left:1658px;top:801px;width:16px;height:17px;background:#efefef;border-right:1px solid #777;border-bottom:1px solid #777"></div><div class="a" style="left:1658px;top:818px;width:16px;height:14px;background:#efefef;border-right:1px solid #777"></div>
<svg class="a" style="left:1659px;top:803px" width="12" height="10"><path d="M2 8 H10 L6 3 Z" fill="#000"/></svg>
</div></div>
<div class="a" style="left:1685px;top:499px;width:17px;height:332px;background:#c4c4c4"></div>
<div class="a" style="left:1685px;top:499px;width:17px;height:18px;background:#f0f0f0;border:1px solid #e0e0e0"></div>
<svg class="a" style="left:1685px;top:499px" width="17" height="18"><path d="M4.5 11 H12.5 L8.5 6.5 Z" fill="#000"/></svg>
<div class="a" style="left:1685px;top:778px;width:17px;height:21px;background:#efefef;border-right:1px solid #777;border-bottom:1px solid #777;border-left:1px solid #fff;border-top:1px solid #fff"></div>
<div class="a" style="left:1685px;top:815px;width:17px;height:16px;background:#efefef;border-right:1px solid #777;border-bottom:1px solid #777"></div>
<svg class="a" style="left:1685px;top:815px" width="17" height="16"><path d="M4.5 6 H12.5 L8.5 10.5 Z" fill="#000"/></svg>
<div class="a" style="left:125px;top:437px;width:99px;height:40px;border:3px solid #e4161e;border-radius:11px;z-index:40"></div>
<div class="a" style="left:600px;top:439px;width:88px;height:37px;border:3px solid #e4161e;border-radius:11px;z-index:40"></div>
<div class="a" style="left:11px;top:616px;width:1657px;height:215px;border:3px solid #e4161e;border-radius:16px;z-index:40"></div>
<div class="a" style="left:3px;top:831px;width:1699px;height:26px;background:#fff"></div>
<svg class="a" style="left:8px;top:836px" width="18" height="18"><path d="M2.5 2.5 L8 8 L2.5 13.5 M7 2.5 L12.5 8 L7 13.5" fill="none" stroke="#b1b1b3" stroke-width="1.1"/></svg>
<div class="a" style="left:3px;top:857px;width:1699px;height:5px;background:#c4c4c4"></div>
</body></html>
